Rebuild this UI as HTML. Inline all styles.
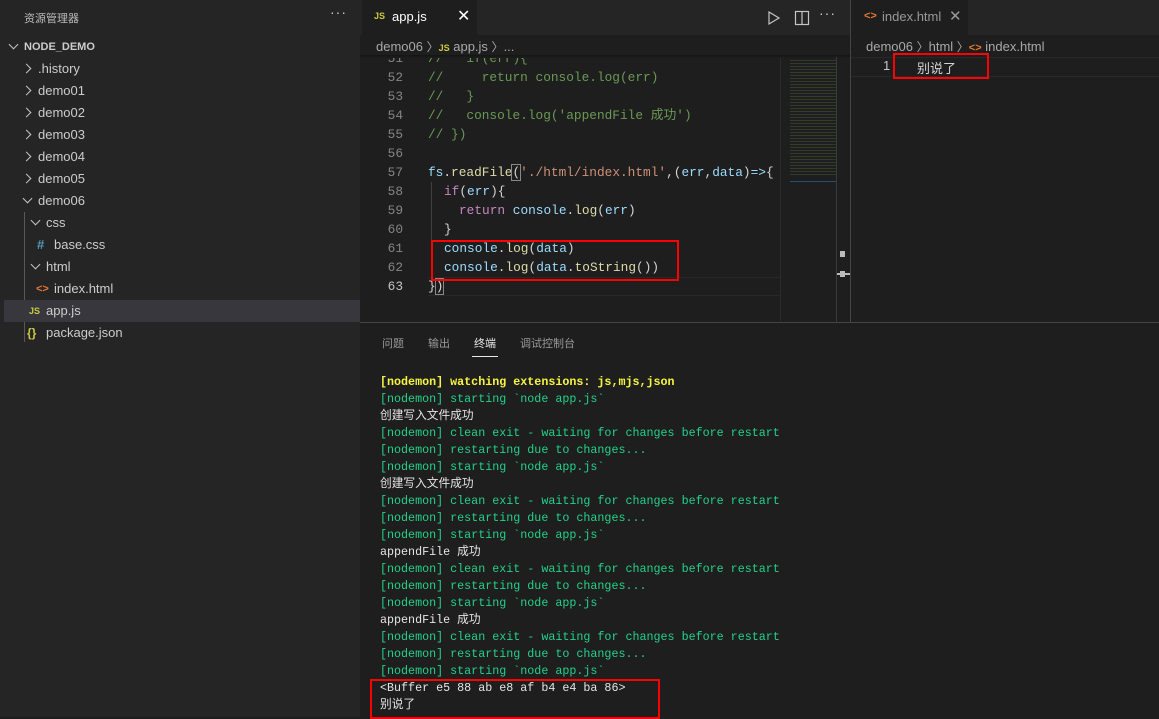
<!DOCTYPE html>
<html><head><meta charset="utf-8"><style>
*{margin:0;padding:0;box-sizing:border-box}
body{width:1159px;height:717px;overflow:hidden;background:#1e1e1e;position:relative;font-family:"Liberation Sans","Noto Sans CJK SC",sans-serif;color:#ccc}
.abs{position:absolute}
.sb{left:0;top:0;width:360px;height:717px;background:#252526}
.row{position:absolute;left:0;width:360px;height:22px;line-height:22px;font-size:13px;color:#ccc;white-space:nowrap}
.chev{position:absolute;top:7px;width:7px;height:7px;border-right:1.3px solid #c5c5c5;border-bottom:1.3px solid #c5c5c5}
.r{transform:rotate(-45deg)}.d{transform:rotate(45deg);top:5px}
.mono{font-family:"Liberation Mono","Noto Sans CJK SC",monospace}
.code{position:absolute;left:360px;width:420px;height:19px;line-height:19px;font-size:12.8px;white-space:pre}
.ln{position:absolute;left:0;width:43px;text-align:right;color:#858585}
.t{position:absolute;left:380px;height:17px;line-height:17px;font-size:11.7px;white-space:pre;color:#23d18b}
.c{color:#6a9955}.s{color:#ce9178}.k{color:#c586c0}.f{color:#dcdcaa}.v{color:#9cdcfe}.w{color:#d4d4d4}.y{color:#f5f543;font-weight:bold}
.red{position:absolute;border:2px solid #f00}
</style></head><body>
<div class="abs sb"></div>
<div class="abs" style="left:24px;top:10px;font-size:11px;color:#bbb">资源管理器</div>
<div class="abs" style="left:330px;top:4px;font-size:14px;color:#ccc;letter-spacing:1px">···</div>

<div class="row" style="top:36px"><span class="chev d" style="left:10px"></span><b style="position:absolute;left:24px;font-size:11px">NODE_DEMO</b></div>
<div class="row" style="top:58px"><span class="chev r" style="left:23px"></span><span style="position:absolute;left:38px">.history</span></div>
<div class="row" style="top:80px"><span class="chev r" style="left:23px"></span><span style="position:absolute;left:38px">demo01</span></div>
<div class="row" style="top:102px"><span class="chev r" style="left:23px"></span><span style="position:absolute;left:38px">demo02</span></div>
<div class="row" style="top:124px"><span class="chev r" style="left:23px"></span><span style="position:absolute;left:38px">demo03</span></div>
<div class="row" style="top:146px"><span class="chev r" style="left:23px"></span><span style="position:absolute;left:38px">demo04</span></div>
<div class="row" style="top:168px"><span class="chev r" style="left:23px"></span><span style="position:absolute;left:38px">demo05</span></div>
<div class="row" style="top:190px"><span class="chev d" style="left:24px"></span><span style="position:absolute;left:38px">demo06</span></div>
<div class="abs" style="left:24px;top:212px;width:1px;height:130px;background:#585858"></div>
<div class="row" style="top:212px"><span class="chev d" style="left:32px"></span><span style="position:absolute;left:46px">css</span></div>
<div class="row" style="top:234px"><span style="position:absolute;left:37px;color:#519aba;font-weight:bold">#</span><span style="position:absolute;left:54px">base.css</span></div>
<div class="row" style="top:256px"><span class="chev d" style="left:32px"></span><span style="position:absolute;left:46px">html</span></div>
<div class="row" style="top:278px"><span style="position:absolute;left:36px;color:#e37933;font-size:11px;font-weight:bold">&lt;&gt;</span><span style="position:absolute;left:54px">index.html</span></div>
<div class="row" style="top:300px;background:#37373d;left:4px;width:356px"><span style="position:absolute;left:25px;color:#cbcb41;font-size:9px;font-weight:bold">JS</span><span style="position:absolute;left:42px">app.js</span></div>
<div class="row" style="top:322px"><span style="position:absolute;left:27px;color:#cbcb41;font-size:12px;font-weight:bold">{}</span><span style="position:absolute;left:46px">package.json</span></div>

<!-- tab bar -->
<div class="abs" style="left:360px;top:0;width:799px;height:35px;background:#252526"></div>
<div class="abs" style="left:362px;top:0;width:115px;height:35px;background:#1e1e1e"></div>
<div class="abs" style="left:374px;top:11px;color:#cbcb41;font-size:9px;font-weight:bold">JS</div>
<div class="abs" style="left:392px;top:9px;color:#fff;font-size:13px">app.js</div>
<div class="abs" style="left:457px;top:6px;color:#fff;font-size:16px">✕</div>
<svg class="abs" style="left:766px;top:10px" width="16" height="16"><path d="M3 2 L13 8 L3 14 Z" fill="none" stroke="#c5c5c5" stroke-width="1.2"/></svg>
<svg class="abs" style="left:794px;top:10px" width="16" height="16"><rect x="1.5" y="1.5" width="13" height="13" fill="none" stroke="#c5c5c5" stroke-width="1.2"/><line x1="8" y1="2" x2="8" y2="14" stroke="#c5c5c5" stroke-width="1.2"/></svg>
<div class="abs" style="left:819px;top:5px;font-size:14px;color:#ccc;letter-spacing:1px">···</div>
<div class="abs" style="left:850px;top:0;width:1px;height:323px;background:#444"></div>
<div class="abs" style="left:851px;top:0;width:117px;height:35px;background:#1e1e1e"></div>
<div class="abs" style="left:864px;top:10px;color:#e37933;font-size:11px;font-weight:bold">&lt;&gt;</div>
<div class="abs" style="left:882px;top:9px;color:#999;font-size:13px">index.html</div>
<div class="abs" style="left:949px;top:7px;color:#999;font-size:15px">✕</div>

<!-- breadcrumbs -->
<div class="abs" style="left:376px;top:38px;font-size:13px;color:#a9a9a9;white-space:nowrap">demo06 <span style="font-size:12px">〉</span><span style="color:#cbcb41;font-size:9px;font-weight:bold">JS</span> app.js <span style="font-size:12px">〉</span>...</div>
<div class="abs" style="left:360px;top:55px;width:490px;height:3px;background:linear-gradient(#151515,#1e1e1e)"></div>
<div class="abs" style="left:866px;top:38px;font-size:13px;color:#a9a9a9;white-space:nowrap">demo06 <span style="font-size:12px">〉</span>html <span style="font-size:12px">〉</span><span style="color:#e37933;font-size:11px;font-weight:bold">&lt;&gt;</span> index.html</div>

<!-- code -->
<div class="code mono" style="top:49px;height:10px;overflow:hidden;top:58px"><div style="position:absolute;top:-9px;left:0;width:420px;height:19px"><span class="ln">51</span><span style="position:absolute;left:68px" class="c">//   if(err){</span></div></div>
<div class="code mono" style="top:68px"><span class="ln">52</span><span style="position:absolute;left:68px" class="c">//     return console.log(err)</span></div>
<div class="code mono" style="top:87px"><span class="ln">53</span><span style="position:absolute;left:68px" class="c">//   }</span></div>
<div class="code mono" style="top:106px"><span class="ln">54</span><span style="position:absolute;left:68px" class="c">//   console.log('appendFile 成功')</span></div>
<div class="code mono" style="top:125px"><span class="ln">55</span><span style="position:absolute;left:68px" class="c">// })</span></div>
<div class="code mono" style="top:144px"><span class="ln">56</span></div>
<div class="code mono" style="top:163px"><span class="ln">57</span><span style="position:absolute;left:68px"><span class="v">fs</span><span class="w">.</span><span class="f">readFile</span><span class="w" style="outline:1px solid #888">(</span><span class="s">'./html/index.html'</span><span class="w">,(</span><span class="v">err</span><span class="w">,</span><span class="v">data</span><span class="w">)</span><span class="v">=&gt;</span><span class="w">{</span></span></div>
<div class="code mono" style="top:182px"><span class="ln">58</span><span style="position:absolute;left:84px"><span class="k">if</span><span class="w">(</span><span class="v">err</span><span class="w">){</span></span></div>
<div class="code mono" style="top:201px"><span class="ln">59</span><span style="position:absolute;left:99px"><span class="k">return</span> <span class="v">console</span><span class="w">.</span><span class="f">log</span><span class="w">(</span><span class="v">err</span><span class="w">)</span></span></div>
<div class="code mono" style="top:220px"><span class="ln">60</span><span style="position:absolute;left:84px" class="w">}</span></div>
<div class="code mono" style="top:239px"><span class="ln">61</span><span style="position:absolute;left:84px"><span class="v">console</span><span class="w">.</span><span class="f">log</span><span class="w">(</span><span class="v">data</span><span class="w">)</span></span></div>
<div class="code mono" style="top:258px"><span class="ln">62</span><span style="position:absolute;left:84px"><span class="v">console</span><span class="w">.</span><span class="f">log</span><span class="w">(</span><span class="v">data</span><span class="w">.</span><span class="f">toString</span><span class="w">())</span></span></div>
<div class="abs" style="left:428px;top:277px;width:352px;height:19px;border-top:1px solid #282828;border-bottom:1px solid #282828"></div>
<div class="code mono" style="top:277px"><span class="ln" style="color:#c6c6c6">63</span><span style="position:absolute;left:68px" class="w">}<span style="outline:1px solid #888">)</span></span></div>
<div class="abs" style="left:431px;top:182px;width:1px;height:95px;background:#404040"></div>
<div class="red" style="left:431px;top:240px;width:248px;height:41px"></div>

<!-- minimap -->
<div class="abs" style="left:780px;top:58px;width:1px;height:265px;background:#2a2a2a"></div>
<div class="abs" style="left:790px;top:58px;width:46px;height:118px;background:repeating-linear-gradient(#1e1e1e 0 2px,#34422d 2px 3px);opacity:.8"></div>
<div class="abs" style="left:790px;top:181px;width:46px;height:1px;background:#264f78"></div>
<div class="abs" style="left:836px;top:57px;width:1px;height:266px;background:#3a3a3a"></div>
<div class="abs" style="left:840px;top:251px;width:5px;height:6px;background:#bbb"></div>
<div class="abs" style="left:837px;top:273px;width:13px;height:2px;background:#bbb"></div>
<div class="abs" style="left:840px;top:271px;width:5px;height:6px;background:#bbb"></div>

<!-- right editor -->
<div class="abs" style="left:851px;top:57px;width:308px;height:20px;border-top:1px solid #282828;border-bottom:1px solid #282828"></div>
<div class="abs" style="left:883px;top:58px;font-size:13px;color:#c6c6c6" >1</div>
<div class="abs" style="left:917px;top:58px;font-size:13px;color:#d4d4d4">别说了</div>
<div class="red" style="left:893px;top:53px;width:96px;height:26px"></div>

<!-- panel -->
<div class="abs" style="left:360px;top:322px;width:799px;height:1px;background:#444"></div>
<div class="abs" style="left:382px;top:335px;font-size:11px;color:#999">问题</div>
<div class="abs" style="left:428px;top:335px;font-size:11px;color:#999">输出</div>
<div class="abs" style="left:474px;top:335px;font-size:11px;color:#e7e7e7">终端</div>
<div class="abs" style="left:472px;top:356px;width:26px;height:1px;background:#e7e7e7"></div>
<div class="abs" style="left:520px;top:335px;font-size:11px;color:#999">调试控制台</div>

<div class="t mono" style="top:374px"><span class="y">[nodemon] watching extensions: js,mjs,json</span></div>
<div class="t mono" style="top:391px">[nodemon] starting `node app.js`</div>
<div class="t mono" style="top:408px;color:#e5e5e5">创建写入文件成功</div>
<div class="t mono" style="top:425px">[nodemon] clean exit - waiting for changes before restart</div>
<div class="t mono" style="top:442px">[nodemon] restarting due to changes...</div>
<div class="t mono" style="top:459px">[nodemon] starting `node app.js`</div>
<div class="t mono" style="top:476px;color:#e5e5e5">创建写入文件成功</div>
<div class="t mono" style="top:493px">[nodemon] clean exit - waiting for changes before restart</div>
<div class="t mono" style="top:510px">[nodemon] restarting due to changes...</div>
<div class="t mono" style="top:527px">[nodemon] starting `node app.js`</div>
<div class="t mono" style="top:544px;color:#e5e5e5">appendFile 成功</div>
<div class="t mono" style="top:561px">[nodemon] clean exit - waiting for changes before restart</div>
<div class="t mono" style="top:578px">[nodemon] restarting due to changes...</div>
<div class="t mono" style="top:595px">[nodemon] starting `node app.js`</div>
<div class="t mono" style="top:612px;color:#e5e5e5">appendFile 成功</div>
<div class="t mono" style="top:629px">[nodemon] clean exit - waiting for changes before restart</div>
<div class="t mono" style="top:646px">[nodemon] restarting due to changes...</div>
<div class="t mono" style="top:663px">[nodemon] starting `node app.js`</div>
<div class="t mono" style="top:680px;color:#e5e5e5">&lt;Buffer e5 88 ab e8 af b4 e4 ba 86&gt;</div>
<div class="t mono" style="top:697px;color:#e5e5e5">别说了</div>
<div class="red" style="left:370px;top:679px;width:290px;height:40px"></div>
</body></html>
